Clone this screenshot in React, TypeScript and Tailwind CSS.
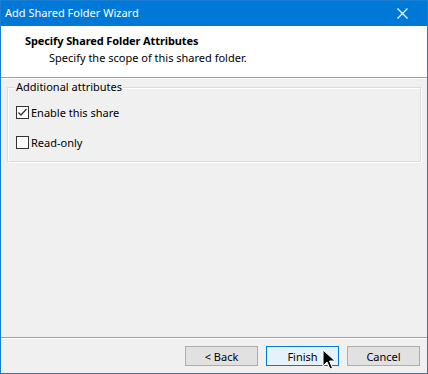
import React from "react";

function Check() {
  return (
    <svg width="11" height="11" viewBox="0 0 11 11" className="block">
      <path d="M1.5 5.5 L4 8 L9.5 2" fill="none" stroke="#333" strokeWidth="1.3" />
    </svg>
  );
}

function Checkbox({ checked, label }: { checked: boolean; label: string }) {
  return (
    <div className="flex items-center h-[13px]">
      <div className="w-[13px] h-[13px] border border-[#333333] bg-white flex items-center justify-center">
        {checked && <Check />}
      </div>
      <span className="ml-[2px] leading-none">{label}</span>
    </div>
  );
}

export default function App() {
  return (
    <div
      className="relative w-[428px] h-[374px] flex flex-col border border-[#1a7fd4] bg-[#f0f0f0] text-[11px] text-black overflow-hidden"
      style={{ fontFamily: '"Segoe UI", "Noto Sans", sans-serif' }}
    >
      {/* Title bar */}
      <div className="h-[25px] shrink-0 bg-[#0078d7] flex items-center justify-between text-white">
        <span className="pl-[4px] text-[11px]">Add Shared Folder Wizard</span>
        <svg width="11" height="11" viewBox="0 0 11 11" className="mr-[19px]">
          <path d="M0.5 0.5 L10.5 10.5 M10.5 0.5 L0.5 10.5" stroke="white" strokeWidth="1.2" />
        </svg>
      </div>
      {/* Header */}
      <div className="h-[51px] shrink-0 bg-white flex flex-col pl-[24px] pt-[5px]">
        <span className="font-bold leading-[16px] mt-[2px] tracking-[-0.1px]">Specify Shared Folder Attributes</span>
        <span className="pl-[24px] leading-[16px] mt-[1px]">Specify the scope of this shared folder.</span>
      </div>
      <div className="h-px shrink-0 bg-[#a0a0a0]" />
      <div className="h-px shrink-0 bg-white" />
      {/* Body */}
      <div className="flex-1 px-[6px] pt-[8px]">
        <div className="relative h-[75px] border border-[#dcdcdc] shadow-[inset_1px_1px_0_#ffffff,1px_1px_0_#ffffff]">
          <span className="absolute left-[7px] -top-[9px] px-[1px] bg-[#f0f0f0] leading-[16px]">Additional attributes</span>
          <div className="flex flex-col gap-[17px] pl-[8px] pt-[18px]">
            <Checkbox checked label="Enable this share" />
            <Checkbox checked={false} label="Read-only" />
          </div>
        </div>
      </div>
      <div className="h-px shrink-0 bg-[#a0a0a0]" />
      <div className="h-px shrink-0 bg-white" />
      {/* Buttons */}
      <div className="h-[34px] shrink-0 flex items-start justify-end pr-[7px] pt-[7px] gap-[8px]">
        <button className="w-[73px] h-[20px] border border-[#adadad] bg-[#e1e1e1] leading-none">&lt; Back</button>
        <button className="w-[73px] h-[20px] border border-[#0078d7] bg-[#e5f1fb] leading-none">Finish</button>
        <button className="w-[73px] h-[20px] border border-[#adadad] bg-[#e1e1e1] leading-none">Cancel</button>
      </div>
      {/* Mouse cursor */}
      <svg
        className="absolute left-[321px] top-[348px]"
        width="14"
        height="22"
        viewBox="0 0 14 22"
      >
        <path
          d="M1 1 L1 17 L5 13 L8 20 L10.5 19 L7.5 12 L13 12 Z"
          fill="black"
          stroke="white"
          strokeWidth="1"
          strokeLinejoin="round"
        />
      </svg>
    </div>
  );
}
